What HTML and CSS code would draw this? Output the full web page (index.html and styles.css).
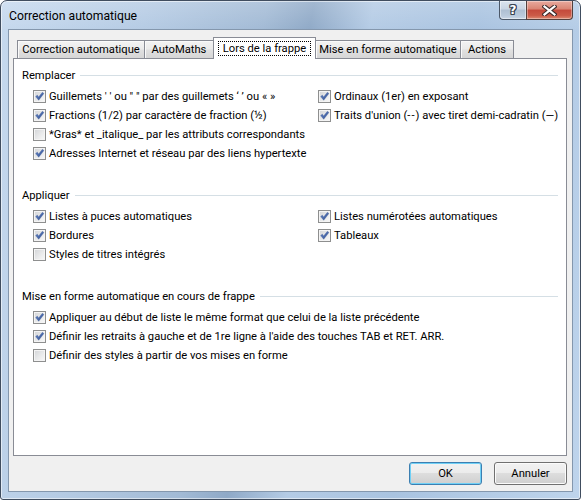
FILE: index.html
```html
<!DOCTYPE html>
<html lang="fr">
<head>
<meta charset="utf-8">
<title>Correction automatique</title>
<link rel="stylesheet" href="styles.css">
</head>
<body>
<svg class="defs" width="0" height="0">
  <defs>
    <linearGradient id="tickgrad" x1="0" y1="0" x2="1" y2="1">
      <stop offset="0" stop-color="#6d8cc9"/>
      <stop offset="1" stop-color="#2b4a8e"/>
    </linearGradient>
  </defs>
</svg>
<div class="window">
  <div class="titlebar">
    <span class="title">Correction automatique</span>
    <div class="caption">
      <div class="cap-btn cap-help"><span class="help-glyph">?</span></div>
      <div class="cap-btn cap-close">
        <svg width="15" height="11" viewBox="0 0 15 11">
          <path d="M2.5 1.5 L12.5 9.5 M12.5 1.5 L2.5 9.5" stroke="#3b2b2b" stroke-width="4.2" stroke-linecap="square" fill="none"/>
          <path d="M2.5 1.5 L12.5 9.5 M12.5 1.5 L2.5 9.5" stroke="#ffffff" stroke-width="2.2" stroke-linecap="square" fill="none"/>
        </svg>
      </div>
    </div>
  </div>
  <div class="client">
    <div class="tabs">
      <div class="tab tab-correction">Correction automatique</div>
      <div class="tab tab-automaths">AutoMaths</div>
      <div class="tab tab-frappe selected"><span class="focus">Lors de la frappe</span></div>
      <div class="tab tab-miseenforme">Mise en forme automatique</div>
      <div class="tab tab-actions">Actions</div>
    </div>
    <div class="panel">
      <div class="group">
        <div class="group-title">Remplacer</div>
        <div class="group-rows cols">
          <div class="col col-left">
            <div class="row"><span class="cb checked"><svg viewBox="0 0 13 13" width="13" height="13"><polygon class="tick" points="2.6,6.6 4.3,5.1 5.6,6.9 9.4,2.3 10.9,3.6 5.7,10.3"/></svg></span><span>Guillemets ' ' ou " " par des guillemets ‘ ’ ou « »</span></div>
            <div class="row"><span class="cb checked"><svg viewBox="0 0 13 13" width="13" height="13"><polygon class="tick" points="2.6,6.6 4.3,5.1 5.6,6.9 9.4,2.3 10.9,3.6 5.7,10.3"/></svg></span><span>Fractions (1/2) par caractère de fraction (½)</span></div>
            <div class="row"><span class="cb"></span><span>*Gras* et _italique_ par les attributs correspondants</span></div>
            <div class="row"><span class="cb checked"><svg viewBox="0 0 13 13" width="13" height="13"><polygon class="tick" points="2.6,6.6 4.3,5.1 5.6,6.9 9.4,2.3 10.9,3.6 5.7,10.3"/></svg></span><span>Adresses Internet et réseau par des liens hypertexte</span></div>
          </div>
          <div class="col col-right">
            <div class="row"><span class="cb checked"><svg viewBox="0 0 13 13" width="13" height="13"><polygon class="tick" points="2.6,6.6 4.3,5.1 5.6,6.9 9.4,2.3 10.9,3.6 5.7,10.3"/></svg></span><span>Ordinaux (1er) en exposant</span></div>
            <div class="row"><span class="cb checked"><svg viewBox="0 0 13 13" width="13" height="13"><polygon class="tick" points="2.6,6.6 4.3,5.1 5.6,6.9 9.4,2.3 10.9,3.6 5.7,10.3"/></svg></span><span>Traits d'union (<span class="dashes">--</span>) avec tiret demi-cadratin (—)</span></div>
          </div>
        </div>
      </div>
      <div class="group">
        <div class="group-title">Appliquer</div>
        <div class="group-rows cols">
          <div class="col col-left">
            <div class="row"><span class="cb checked"><svg viewBox="0 0 13 13" width="13" height="13"><polygon class="tick" points="2.6,6.6 4.3,5.1 5.6,6.9 9.4,2.3 10.9,3.6 5.7,10.3"/></svg></span><span>Listes à puces automatiques</span></div>
            <div class="row"><span class="cb checked"><svg viewBox="0 0 13 13" width="13" height="13"><polygon class="tick" points="2.6,6.6 4.3,5.1 5.6,6.9 9.4,2.3 10.9,3.6 5.7,10.3"/></svg></span><span>Bordures</span></div>
            <div class="row"><span class="cb"></span><span>Styles de titres intégrés</span></div>
          </div>
          <div class="col col-right">
            <div class="row"><span class="cb checked"><svg viewBox="0 0 13 13" width="13" height="13"><polygon class="tick" points="2.6,6.6 4.3,5.1 5.6,6.9 9.4,2.3 10.9,3.6 5.7,10.3"/></svg></span><span>Listes numérotées automatiques</span></div>
            <div class="row"><span class="cb checked"><svg viewBox="0 0 13 13" width="13" height="13"><polygon class="tick" points="2.6,6.6 4.3,5.1 5.6,6.9 9.4,2.3 10.9,3.6 5.7,10.3"/></svg></span><span>Tableaux</span></div>
          </div>
        </div>
      </div>
      <div class="group">
        <div class="group-title">Mise en forme automatique en cours de frappe</div>
        <div class="group-rows">
          <div class="row"><span class="cb checked"><svg viewBox="0 0 13 13" width="13" height="13"><polygon class="tick" points="2.6,6.6 4.3,5.1 5.6,6.9 9.4,2.3 10.9,3.6 5.7,10.3"/></svg></span><span>Appliquer au début de liste le même format que celui de la liste précédente</span></div>
          <div class="row"><span class="cb checked"><svg viewBox="0 0 13 13" width="13" height="13"><polygon class="tick" points="2.6,6.6 4.3,5.1 5.6,6.9 9.4,2.3 10.9,3.6 5.7,10.3"/></svg></span><span>Définir les retraits à gauche et de 1re ligne à l'aide des touches TAB et RET. ARR.</span></div>
          <div class="row"><span class="cb"></span><span>Définir des styles à partir de vos mises en forme</span></div>
        </div>
      </div>
    </div>
    <div class="btn-row">
      <div class="btn btn-default">OK</div>
      <div class="btn">Annuler</div>
    </div>
  </div>
</div>
</body>
</html>
```

FILE: styles.css
```css
* { box-sizing: border-box; }
html, body { margin: 0; padding: 0; }
body {
  width: 581px;
  height: 500px;
  overflow: hidden;
  background: #ffffff;
  font-family: Roboto, "Noto Sans", "DejaVu Sans", sans-serif;
  font-size: 11.2px;
  color: #000000;
}
.defs { position: absolute; width: 0; height: 0; }
.window {
  width: 581px;
  height: 500px;
  border: 1px solid #404d5f;
  border-radius: 7px 7px 3px 3px;
  padding: 0 7px 7px 7px;
  display: flex;
  flex-direction: column;
  background:
    linear-gradient(180deg, rgba(255,255,255,0.18) 0%, rgba(255,255,255,0) 30px),
    linear-gradient(100deg, #c6d9ee 0%, #b5cbe4 22%, #a2bad5 40%, #8fa9c7 47%, #b4cbe5 56%, #a9c3e0 72%, #bed4ec 100%);
  box-shadow: inset 0 0 0 1px rgba(255,255,255,0.55);
}
.titlebar {
  height: 28px;
  display: flex;
  align-items: flex-start;
  flex: none;
}
.title {
  padding-top: 7px;
  padding-left: 1px;
  line-height: 16px;
  font-size: 12.2px;
  color: #000;
}
.caption {
  margin-left: auto;
  display: flex;
  height: 19px;
}
.cap-btn {
  height: 19px;
  display: flex;
  align-items: center;
  justify-content: center;
  border: 1px solid #4c5868;
  border-top: 0;
}
.cap-help {
  width: 27px;
  border-right: 0;
  border-radius: 0 0 0 4px;
  background: linear-gradient(180deg, #dbe4ee 0%, #c9d5e3 45%, #aebfd2 50%, #b9c9db 80%, #c8d6e6 100%);
  box-shadow: inset 0 0 0 1px rgba(255,255,255,0.45);
}
.cap-close {
  width: 47px;
  border-color: #53403d;
  border-radius: 0 0 4px 0;
  background: linear-gradient(180deg, #e8aa9e 0%, #d98473 45%, #c4493b 50%, #cb5a47 80%, #dc8a72 100%);
  box-shadow: inset 0 0 0 1px rgba(255,255,255,0.35);
}
.help-glyph {
  font-family: "DejaVu Sans", sans-serif;
  font-weight: bold;
  font-size: 12px;
  line-height: 13px;
  color: #ffffff;
  text-shadow: 1px 0 0 #3a4452, -1px 0 0 #3a4452, 0 1px 0 #3a4452, 0 -1px 0 #3a4452, 1px 1px 0 #3a4452, -1px -1px 0 #3a4452, 1px -1px 0 #3a4452, -1px 1px 0 #3a4452;
}
.client {
  flex: 1;
  background: #f0f0f0;
  border: 1px solid #8497ad;
  padding: 7px 4px 0 4px;
}
.tabs {
  display: flex;
  align-items: flex-end;
  height: 21px;
  padding-left: 4px;
  position: relative;
  z-index: 1;
}
.tab {
  height: 18px;
  border: 1px solid #898c95;
  border-bottom: 0;
  margin-right: -1px;
  display: flex;
  align-items: center;
  justify-content: center;
  white-space: nowrap;
  background: linear-gradient(180deg, #f3f3f3 0%, #ebebeb 45%, #e0e0e0 55%, #d6d6d6 100%);
  box-shadow: inset 1px 1px 0 #fafafa;
}
.tab-correction { width: 128px; }
.tab-automaths { width: 70px; }
.tab-frappe { width: 103px; }
.tab-miseenforme { width: 146px; }
.tab-actions { width: 54px; }
.tab.selected {
  height: 22px;
  margin-bottom: -1px;
  background: #ffffff;
  box-shadow: none;
  position: relative;
  z-index: 2;
  padding-bottom: 1px;
}
.focus {
  border: 1px dotted #000000;
  padding: 0 4px;
  line-height: 13px;
}
.panel {
  width: 554px;
  height: 398px;
  background: #ffffff;
  border: 1px solid #898c95;
  padding: 7px 8px 0 8px;
}
.group + .group { margin-top: 23px; }
.group-title {
  display: flex;
  align-items: center;
  height: 19px;
  white-space: nowrap;
}
.group-title::after {
  content: "";
  flex: 1;
  height: 1px;
  background: #d5dfe5;
  margin-left: 5px;
}
.group-rows {
  margin-top: 2px;
  padding-left: 11px;
}
.cols { display: flex; }
.col-left { width: 285px; flex: none; }
.row {
  height: 19px;
  display: flex;
  align-items: center;
  white-space: nowrap;
}
.dashes { letter-spacing: 1px; }
.cb {
  width: 13px;
  height: 13px;
  flex: none;
  margin-right: 3px;
  border: 1px solid #8e8f8f;
  background: linear-gradient(135deg, #d2d4d7 0%, #e9eaeb 55%, #f9f9f9 100%);
  box-shadow: inset 0 0 0 1px #f4f4f4;
  position: relative;
}
.cb svg {
  position: absolute;
  left: -1px;
  top: -1px;
}
.tick { fill: url(#tickgrad); stroke: #34508f; stroke-width: 0.3; }
.btn-row {
  display: flex;
  justify-content: flex-end;
  gap: 12px;
  width: 554px;
  margin-top: 6px;
}
.btn {
  width: 73px;
  height: 23px;
  border: 1px solid #707070;
  border-radius: 3px;
  display: flex;
  align-items: center;
  justify-content: center;
  background: linear-gradient(180deg, #f2f2f2 0%, #ebebeb 50%, #dddddd 50%, #cfcfcf 100%);
  box-shadow: inset 0 0 0 1px #fbfbfb;
}
.btn-default {
  border-color: #3c7fb1;
  box-shadow: inset 0 0 0 1px #6fd0f6;
}
```
